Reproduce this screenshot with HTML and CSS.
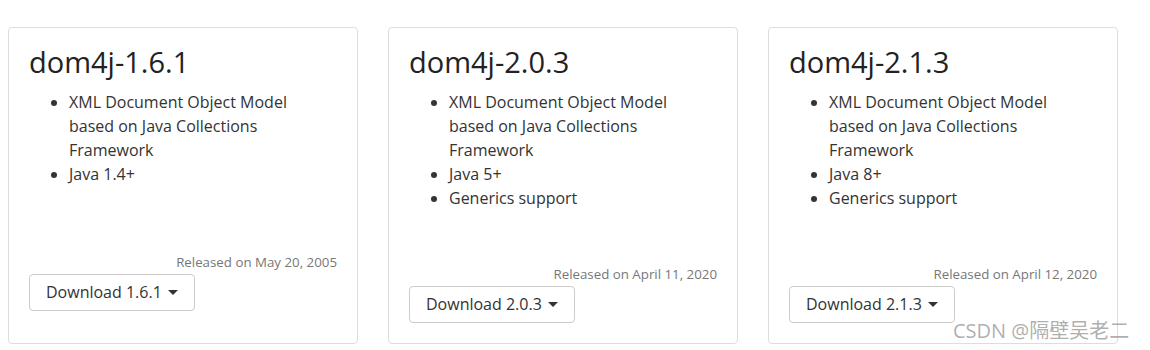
FILE: index.html
```html
<!DOCTYPE html>
<html>
<head>
<meta charset="utf-8">
<link rel="stylesheet" href="styles.css">
</head>
<body>
<div class="cards">
  <div class="card">
    <h2 class="title">dom4j-1.6.1</h2>
    <ul class="features">
      <li>XML Document Object Model based on Java Collections Framework</li>
      <li>Java 1.4+</li>
    </ul>
    <div class="released">Released on May 20, 2005</div>
    <button class="btn">Download 1.6.1 <span class="caret"></span></button>
  </div>
  <div class="card">
    <h2 class="title">dom4j-2.0.3</h2>
    <ul class="features">
      <li>XML Document Object Model based on Java Collections Framework</li>
      <li>Java 5+</li>
      <li>Generics support</li>
    </ul>
    <div class="released">Released on April 11, 2020</div>
    <button class="btn">Download 2.0.3 <span class="caret"></span></button>
  </div>
  <div class="card">
    <h2 class="title">dom4j-2.1.3</h2>
    <ul class="features">
      <li>XML Document Object Model based on Java Collections Framework</li>
      <li>Java 8+</li>
      <li>Generics support</li>
    </ul>
    <div class="released">Released on April 12, 2020</div>
    <button class="btn">Download 2.1.3 <span class="caret"></span></button>
  </div>
</div>
<div class="watermark">CSDN @隔壁吴老二</div>
</body>
</html>
```

FILE: styles.css
```css
html, body {
  margin: 0;
  padding: 0;
  background: #fff;
}
body {
  font-family: "Open Sans", "Noto Sans", "Noto Sans CJK SC", sans-serif;
  color: #333;
  position: relative;
  width: 1150px;
  height: 350px;
  overflow: hidden;
}
.cards {
  display: flex;
  gap: 30px;
  padding: 27px 8px 0;
  align-items: stretch;
}
.card {
  box-sizing: border-box;
  width: 350px;
  border: 1px solid #ddd;
  border-radius: 4px;
  padding: 17px 20px 20px;
  display: flex;
  flex-direction: column;
  align-items: flex-start;
}
.title {
  margin: 0 0 12px;
  font-size: 29px;
  line-height: 33px;
  font-weight: 400;
  color: #222;
}
.features {
  margin: 0 0 55px;
  padding: 0 20px 0 40px;
  min-height: 108px;
  font-size: 16px;
  line-height: 24px;
  color: #333;
  box-sizing: border-box;
  align-self: stretch;
}
.released {
  align-self: stretch;
  text-align: right;
  font-size: 13.3px;
  line-height: 18px;
  color: #777;
}
.btn {
  margin-top: 3px;
  font-family: inherit;
  font-size: 16px;
  line-height: 23px;
  padding: 6px 16px;
  color: #333;
  background: #fff;
  border: 1px solid #ccc;
  border-radius: 4px;
  display: flex;
  align-items: center;
  gap: 6px;
}
.caret {
  display: inline-block;
  width: 0;
  height: 0;
  border-top: 5px solid #333;
  border-left: 5px solid transparent;
  border-right: 5px solid transparent;
}
.watermark {
  position: absolute;
  left: 953px;
  top: 318px;
  font-size: 20px;
  line-height: 26px;
  color: rgba(140, 140, 140, 0.7);
  white-space: nowrap;
}
```
